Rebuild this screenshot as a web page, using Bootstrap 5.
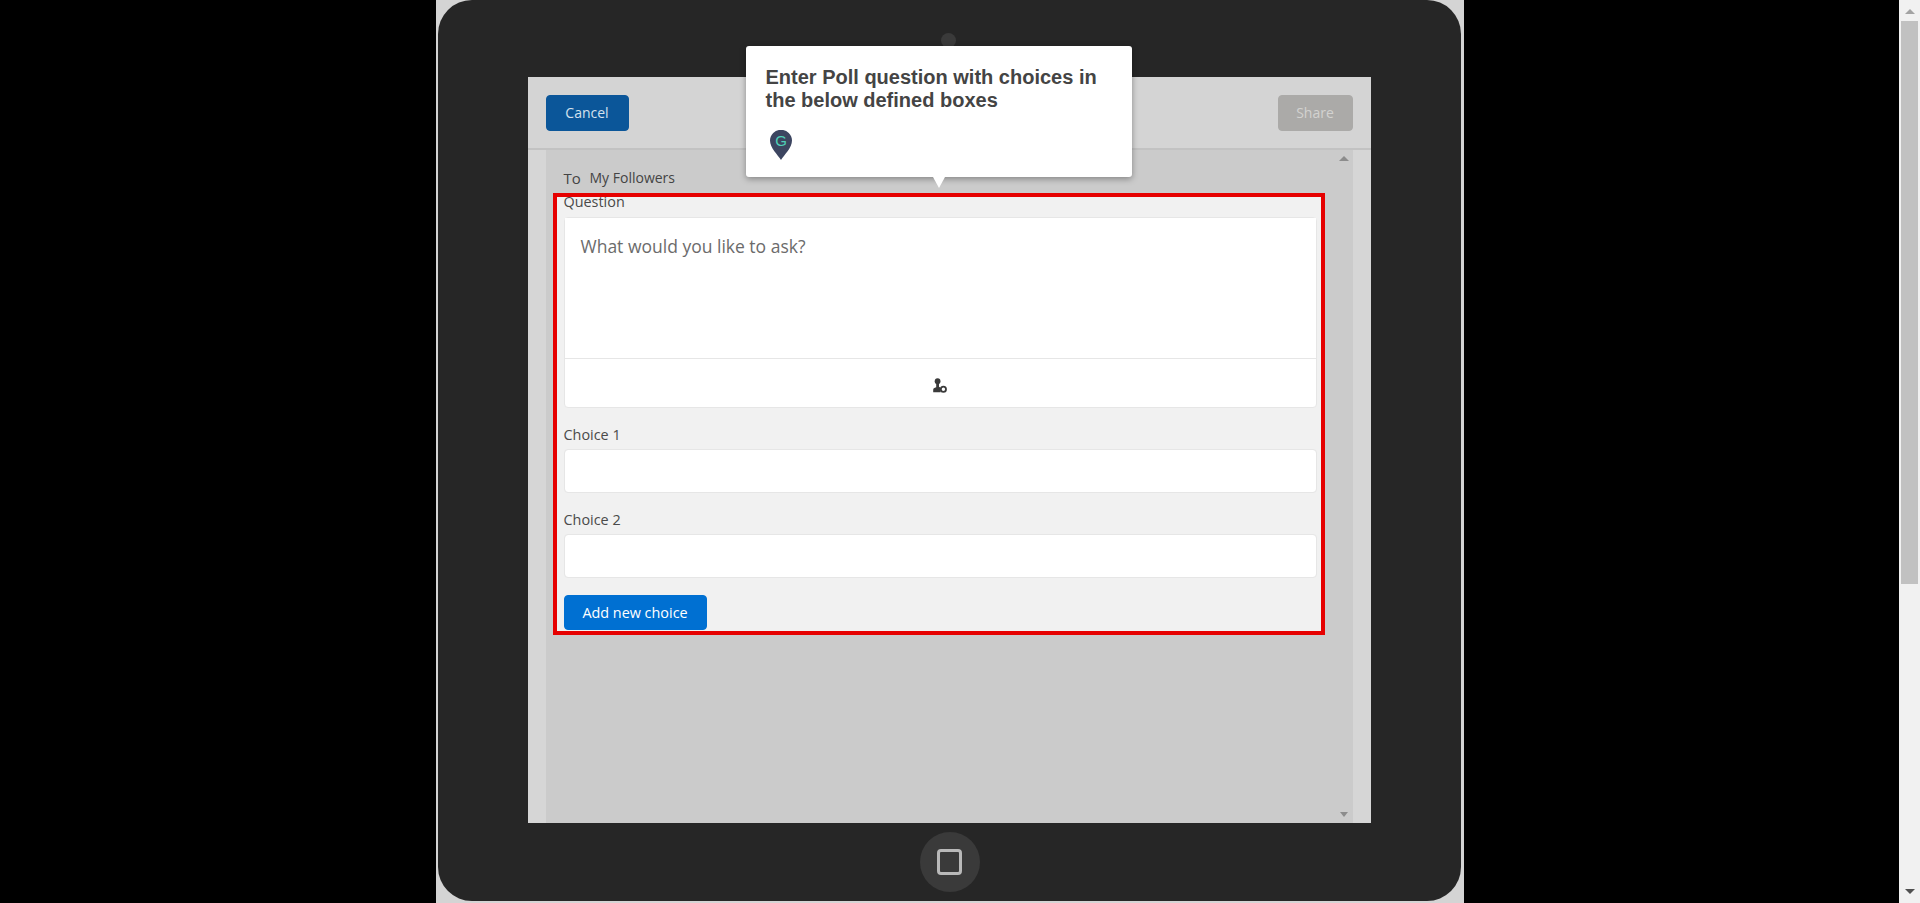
<!DOCTYPE html>
<html lang="en">
<head>
    <meta charset="UTF-8">
    <title>Poll walkthrough</title>
    <link href="https://cdn.jsdelivr.net/npm/bootstrap@5.3.0/dist/css/bootstrap.min.css" rel="stylesheet">
    <style>
        html, body { height: 903px; overflow: hidden; background: #000; }
        body { font-family: "Open Sans", sans-serif; }

        .stage { width: 1899px; height: 903px; }
        .frame-back { width: 1028px; height: 903px; padding: 0 3px 0 2px; background: #d4d4d4; }
        .tablet { position: relative; height: 901px; padding-top: 77px; background: #262626; border-radius: 34px; }
        .camera { position: absolute; left: 503px; top: 33px; width: 15px; height: 15px; border-radius: 50%; background: #3a3a3a; }
        .screen { width: 843px; height: 746px; margin-left: 90px; background: #d6d6d6; }

        .screen-head { height: 73px; padding: 0 18px; background: #d4d4d4; border-bottom: 2px solid #c2c2c2; }
        .btn-cancel, .btn-cancel:hover { width: 83px; height: 36px; padding: 0; font-size: 14px; color: #d5e2ee; background: #0b5699; border-color: #0b5699; border-radius: 4px; }
        .btn-share, .btn-share:hover { width: 75px; height: 36px; padding: 0; font-size: 14px; color: #d3d2d0; background: #abaaa8; border-color: #abaaa8; border-radius: 4px; }

        .screen-body { height: 673px; padding: 0 18px; }
        .content-pane { background: #cbcbcb; }
        .pane-main { width: 789px; }
        .pane-scroll { width: 18px; padding: 6px 0 6px; color: #8c8c8c; }
        .arrow-up { width: 0; height: 0; border-left: 5px solid transparent; border-right: 5px solid transparent; border-bottom: 5px solid #8c8c8c; }
        .arrow-down { width: 0; height: 0; border-left: 4px solid transparent; border-right: 4px solid transparent; border-top: 5px solid #8c8c8c; }

        .to-row { height: 43px; padding: 18px 0 0 18px; line-height: 20px; color: #444; }
        .to-label { width: 26px; font-size: 15px; font-weight: 500; }
        .to-value { font-size: 14px; }

        .poll-box { width: 772px; margin-left: 7px; padding: 0 4px 1px 7px; background: #f1f1f1; border: 4px solid #e60000; }
        .poll-label { display: block; height: 20px; margin: 0; font-size: 14.4px; line-height: 10px; color: #4a4a4a; }
        .poll-label-gap { height: 24px; margin-bottom: 0; padding-top: 0; line-height: 20px; }
        .question-wrap { background: #fff; border: 1px solid #e6e6e6; border-radius: 4px; }
        .question-input { display: block; width: 100%; height: 141px; padding: 16px 16px; font-size: 17.5px; line-height: 24px; resize: none; border: 0; border-bottom: 1px solid #e6e6e6; border-radius: 0; }
        .question-input::placeholder { color: #6b6b6b; opacity: 1; }
        .question-tools { height: 48px; padding-top: 5px; }
        .choice-input { height: 44px; border-color: #e6e6e6; border-radius: 4px; }
        .choice-one { margin-top: 17px; }
        .choice-two { margin-top: 17px; }
        .btn-add, .btn-add:hover { width: 143px; height: 35px; margin-top: 17px; padding: 0; font-size: 14.4px; font-weight: 500; color: #fff; background: #0070d2; border-color: #0070d2; border-radius: 4px; }

        .tip-box { position: absolute; left: 308px; top: 46px; width: 386px; height: 131px; padding: 20px; color: #444; background: #fff; border-radius: 3px; box-shadow: 0 2px 6px rgba(0,0,0,.35); font-family: "Liberation Sans", Arial, sans-serif; }
        .tip-box::after { content: ""; position: absolute; left: 187px; bottom: -11px; border-left: 6px solid transparent; border-right: 6px solid transparent; border-top: 11px solid #fff; }
        .tip-text { margin: 0; font-size: 20px; font-weight: 700; line-height: 23px; }
        .tip-pin { display: block; margin: 18px 0 0 4px; }

        .home-btn { position: absolute; left: 482px; top: 832px; width: 60px; height: 60px; border-radius: 50%; background: #3a3a3a; }
        .home-square { width: 25px; height: 26px; border: 3px solid #b9b9b9; border-radius: 4px; }

        .page-scroll { width: 21px; height: 903px; padding: 9px 0 9px; background: #f1f1f1; }
        .page-thumb { width: 17px; height: 563px; margin-top: 7px; background: #c1c1c1; }
        .bar-up { width: 0; height: 0; border-left: 5px solid transparent; border-right: 5px solid transparent; border-bottom: 5px solid #a3a3a3; }
        .bar-down { width: 0; height: 0; border-left: 5px solid transparent; border-right: 5px solid transparent; border-top: 5px solid #505050; }
    </style>
</head>
<body>
    <div class="d-flex">
        <div class="stage d-flex justify-content-center">
            <div class="frame-back">
                <div class="tablet">
                    <div class="camera"></div>

                    <div class="screen">
                        <div class="screen-head d-flex align-items-center justify-content-between">
                            <button type="button" class="btn btn-cancel">Cancel</button>
                            <button type="button" class="btn btn-share">Share</button>
                        </div>

                        <div class="screen-body">
                            <div class="content-pane d-flex h-100">
                                <div class="pane-main">
                                    <div class="to-row d-flex">
                                        <span class="to-label">To</span>
                                        <span class="to-value">My Followers</span>
                                    </div>

                                    <form class="poll-box">
                                        <label class="poll-label" for="question">Question</label>
                                        <div class="question-wrap">
                                            <textarea class="form-control question-input" id="question" placeholder="What would you like to ask?"></textarea>
                                            <div class="question-tools d-flex align-items-center justify-content-center">
                                                <svg width="16" height="16" viewBox="0 0 16 16">
                                                    <circle cx="5.6" cy="3.2" r="2.9" fill="#3a3a3a"/>
                                                    <path d="M4.2 5.5h2.8v3.2l1.6 1v4.6H1.2v-2.6c0-1.2 1-1.8 3-2.4z" fill="#3a3a3a"/>
                                                    <circle cx="11.4" cy="11.2" r="2.6" fill="#fff" stroke="#3a3a3a" stroke-width="1.8"/>
                                                </svg>
                                            </div>
                                        </div>

                                        <label class="poll-label poll-label-gap choice-one" for="choice1">Choice 1</label>
                                        <input type="text" class="form-control choice-input" id="choice1">

                                        <label class="poll-label poll-label-gap choice-two" for="choice2">Choice 2</label>
                                        <input type="text" class="form-control choice-input" id="choice2">

                                        <button type="button" class="btn btn-add">Add new choice</button>
                                    </form>
                                </div>
                                <div class="pane-scroll d-flex flex-column align-items-center justify-content-between">
                                    <div class="arrow-up"></div>
                                    <div class="arrow-down"></div>
                                </div>
                            </div>
                        </div>
                    </div>

                    <div class="tip-box">
                        <p class="tip-text">Enter Poll question with choices in the below defined boxes</p>
                        <svg class="tip-pin" width="22" height="30" viewBox="0 0 22 30">
                            <path d="M11 30C8 25 0 18 0 10.5A10.8 10.5 0 0 1 22 10.5C22 18 14 25 11 30z" fill="#3c4560"/>
                            <text x="11" y="16" text-anchor="middle" font-family="Liberation Sans, sans-serif" font-size="15" fill="#4fd0b8">G</text>
                        </svg>
                    </div>

                    <div class="home-btn d-flex align-items-center justify-content-center">
                        <div class="home-square"></div>
                    </div>
                </div>
            </div>
        </div>

        <div class="page-scroll d-flex flex-column align-items-center">
            <div class="bar-up"></div>
            <div class="page-thumb"></div>
            <div class="bar-down mt-auto"></div>
        </div>
    </div>

    <script src="https://cdn.jsdelivr.net/npm/bootstrap@5.3.0/dist/js/bootstrap.bundle.min.js"></script>
</body>
</html>
